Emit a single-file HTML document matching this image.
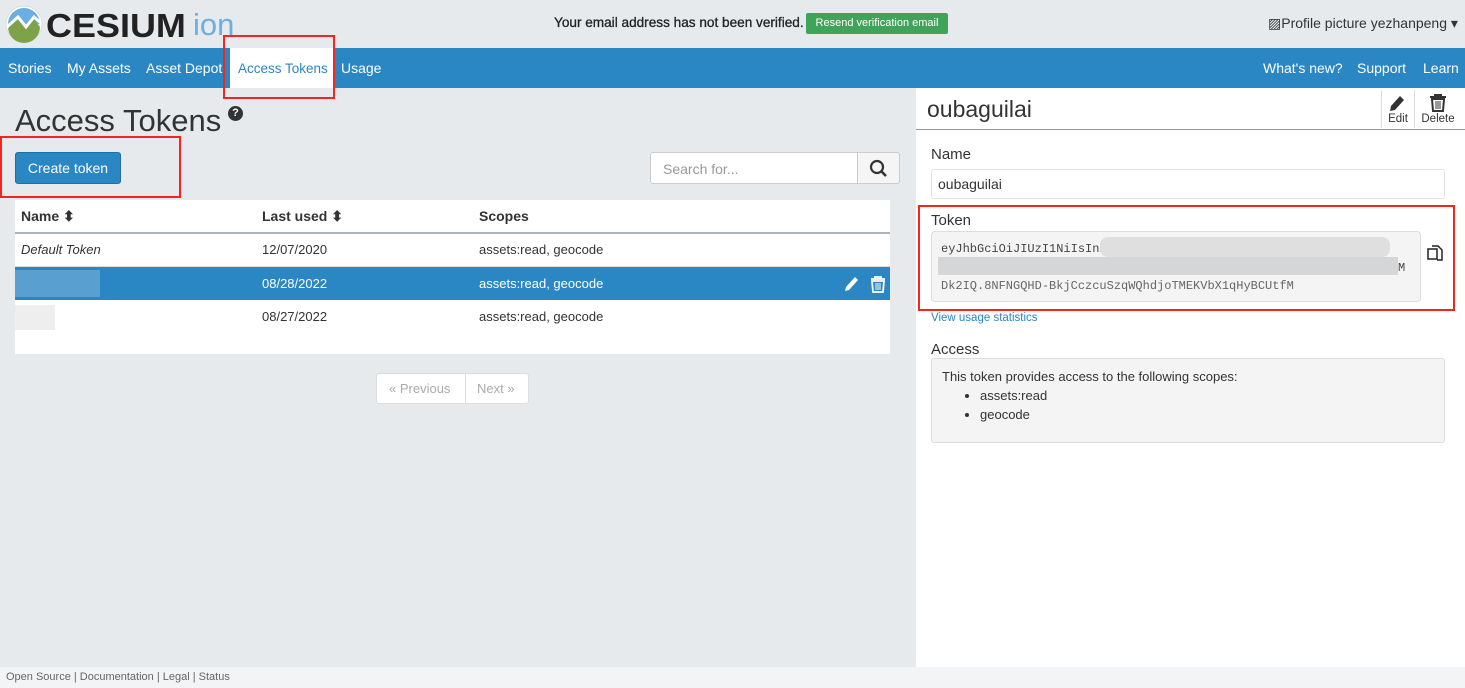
<!DOCTYPE html>
<html><head><meta charset="utf-8"><style>
*{box-sizing:border-box;margin:0;padding:0}
body{width:1465px;height:688px;overflow:hidden;background:#e6eaed;font-family:"Liberation Sans",sans-serif;color:#333;position:relative;font-size:14px}
.abs{position:absolute}
.nav{top:48px;left:0;width:1465px;height:40px;background:#2b87c4}
.nav span{position:absolute;top:12px;color:#fff;font-size:14px}
.red{border:2px solid #f2261f;position:absolute}
.mono{font-family:"Liberation Mono",monospace;font-size:12px;color:#444}
</style></head><body>
<svg class="abs" style="left:4px;top:5px" width="40" height="38" viewBox="0 0 40 38">
<circle cx="20" cy="19" r="18" fill="#fff" stroke="#ddd"/>
<path d="M4 19a16 16 0 0 1 32 0z" fill="#6aaee3"/>
<path d="M4 22a16 16 0 0 0 32 0L30 14 22 24 14 14z" fill="#7da24a"/>
<path d="M3 22L14 12 22 22 30 12 37 18" fill="none" stroke="#fff" stroke-width="3"/>
</svg>
<div class="abs" style="left:46px;top:7px;font-size:33px;font-weight:bold;color:#222;transform:scaleX(1.09);transform-origin:0 0">CESIUM</div>
<div class="abs" style="left:193px;top:7px;font-size:31px;color:#6aaee3">ion</div>
<div class="abs" style="left:554px;top:15px;font-size:13.6px;color:#222;-webkit-text-stroke:0.3px #222">Your email address has not been verified.</div>
<div class="abs" style="left:806px;top:13px;width:142px;height:21px;background:#3fa45a;border-radius:2px;color:#fff;font-size:11px;line-height:21px;text-align:center">Resend verification email</div>
<div class="abs" style="left:1268px;top:15px;font-size:14px;color:#333">▨Profile picture yezhanpeng ▾</div>
<div class="abs nav">
<span style="left:8px">Stories</span><span style="left:67px">My Assets</span><span style="left:146px">Asset Depot</span>
<div class="abs" style="left:230px;top:0;width:103px;height:40px;background:#fff"></div>
<span style="left:238px;color:#2b87c4;top:13px;font-size:13.5px">Access Tokens</span><span style="left:341px">Usage</span>
<span style="left:1263px">What's new?</span><span style="left:1357px">Support</span><span style="left:1423px">Learn</span>
</div>
<div class="red" style="left:223px;top:35px;width:112px;height:64px"></div>
<div class="abs" style="left:15px;top:103px;font-size:31px;color:#333">Access Tokens</div>
<div class="abs" style="left:228px;top:106px;width:15px;height:15px;border-radius:50%;background:#333;color:#fff;font-size:11px;font-weight:bold;text-align:center;line-height:15px">?</div>
<div class="abs" style="left:15px;top:152px;width:106px;height:32px;background:#2b87c4;border:1px solid #1f6fa3;border-radius:3px;color:#fff;text-align:center;line-height:30px">Create token</div>
<div class="red" style="left:0;top:136px;width:181px;height:62px"></div>
<div class="abs" style="left:650px;top:152px;width:208px;height:32px;background:#fff;border:1px solid #ccc;border-radius:3px 0 0 3px;color:#999;padding:8px 12px">Search for...</div>
<div class="abs" style="left:857px;top:152px;width:43px;height:32px;background:#f5f5f5;border:1px solid #ccc;border-radius:0 3px 3px 0">
<svg width="41" height="30"><circle cx="19" cy="14" r="6" fill="none" stroke="#333" stroke-width="2.2"/><path d="M23 18l5 5" stroke="#333" stroke-width="2.6"/></svg></div>
<div class="abs" style="left:15px;top:200px;width:875px;height:154px;background:#fff"></div>
<div class="abs" style="left:15px;top:232px;width:875px;height:2px;background:#aab4bd"></div>
<div class="abs" style="left:15px;top:266px;width:875px;height:1px;background:#ddd"></div>
<div class="abs" style="left:15px;top:267px;width:875px;height:33px;background:#2b87c4"></div>
<div class="abs" style="left:21px;top:208px;font-weight:bold">Name ⬍</div>
<div class="abs" style="left:262px;top:208px;font-weight:bold">Last used ⬍</div>
<div class="abs" style="left:479px;top:208px;font-weight:bold">Scopes</div>
<div class="abs" style="left:21px;top:242px;font-style:italic;font-size:13px">Default Token</div>
<div class="abs" style="left:262px;top:242px;font-size:13px">12/07/2020</div>
<div class="abs" style="left:479px;top:242px;font-size:13px">assets:read, geocode</div>
<div class="abs" style="left:15px;top:270px;width:85px;height:27px;background:#6da9d4;opacity:.7"></div>
<div class="abs" style="left:262px;top:276px;font-size:13px;color:#fff">08/28/2022</div>
<div class="abs" style="left:479px;top:276px;font-size:13px;color:#fff">assets:read, geocode</div>
<svg class="abs" style="left:843px;top:275px" width="45" height="18" viewBox="0 0 45 18">
<path d="M2 16l1-4 9-10 3 3-9 10z" fill="#fff"/>
<path d="M28 4h14M32 4V2h6v2M29 6h12l-1 11h-10z" fill="none" stroke="#fff" stroke-width="1.8"/>
<path d="M33 8v7M35 8v7M37 8v7" stroke="#fff" stroke-width="1"/></svg>
<div class="abs" style="left:15px;top:305px;width:40px;height:25px;background:#eee"></div>
<div class="abs" style="left:262px;top:309px;font-size:13px">08/27/2022</div>
<div class="abs" style="left:479px;top:309px;font-size:13px">assets:read, geocode</div>
<div class="abs" style="left:376px;top:373px;width:153px;height:31px;background:#fff;border:1px solid #ddd;border-radius:3px;color:#aaa;font-size:13px"><span style="position:absolute;left:12px;top:7px">« Previous</span><span style="position:absolute;left:88px;top:0;width:1px;height:29px;background:#ddd"></span><span style="position:absolute;left:100px;top:7px">Next »</span></div>
<div class="abs" style="left:916px;top:88px;width:549px;height:579px;background:#fff"></div>
<div class="abs" style="left:916px;top:129px;width:549px;height:1px;background:#999"></div>
<div class="abs" style="left:927px;top:96px;font-size:23px;color:#333">oubaguilai</div>
<div class="abs" style="left:1381px;top:90px;width:1px;height:38px;background:#ddd"></div>
<div class="abs" style="left:1414px;top:90px;width:1px;height:38px;background:#ddd"></div>
<svg class="abs" style="left:1388px;top:94px" width="20" height="18" viewBox="0 0 20 18"><path d="M2 17l1-5 9-10 4 4-9 10z" fill="#333"/></svg>
<svg class="abs" style="left:1428px;top:94px" width="20" height="18" viewBox="0 0 20 18"><path d="M2 3h16M7 3V1h6v2M4 5h12l-1 12H5z" fill="none" stroke="#333" stroke-width="2"/><path d="M8 7v8M10 7v8M12 7v8" stroke="#333"/></svg>
<div class="abs" style="left:1385px;top:113px;font-size:11.5px;width:26px;text-align:center">Edit</div>
<div class="abs" style="left:1416px;top:113px;font-size:11.5px;width:44px;text-align:center">Delete</div>
<div class="abs" style="left:931px;top:146px;font-size:15px">Name</div>
<div class="abs" style="left:931px;top:169px;width:514px;height:30px;border:1px solid #e4e4e4;border-radius:3px;padding:6px 6px;font-size:14px">oubaguilai</div>
<div class="abs" style="left:931px;top:212px;font-size:15px">Token</div>
<div class="abs" style="left:931px;top:231px;width:490px;height:71px;background:#f4f4f4;border:1px solid #ddd;border-radius:4px"></div>
<div class="abs mono" style="left:941px;top:242px">eyJhbGciOiJIUzI1NiIsInR</div>
<div class="abs" style="left:1100px;top:237px;width:290px;height:20px;background:#dfdfe0;border-radius:8px"></div>
<div class="abs" style="left:938px;top:257px;width:460px;height:18px;background:#d5d6d8"></div>
<div class="abs mono" style="left:1398px;top:261px">M</div>
<div class="abs mono" style="left:941px;top:279px;color:#666">Dk2IQ.8NFNGQHD-BkjCczcuSzqWQhdjoTMEKVbX1qHyBCUtfM</div>
<svg class="abs" style="left:1426px;top:243px" width="20" height="20" viewBox="0 0 20 20"><path d="M2 6h9v10H2zM6 3h6l4 4v10h-5" fill="#fff" stroke="#222" stroke-width="1.5"/></svg>
<div class="red" style="left:918px;top:205px;width:537px;height:106px"></div>
<div class="abs" style="left:931px;top:312px;font-size:11.5px;color:#2b87c4">View usage statistics</div>
<div class="abs" style="left:931px;top:341px;font-size:15px">Access</div>
<div class="abs" style="left:931px;top:358px;width:514px;height:85px;background:#f4f4f4;border:1px solid #ddd;border-radius:3px;padding:10px;font-size:13px">This token provides access to the following scopes:
<ul style="margin-left:38px;margin-top:2px;line-height:19px"><li>assets:read</li><li>geocode</li></ul></div>
<div class="abs" style="left:0;top:667px;width:1465px;height:21px;background:#f3f4f5"></div>
<div class="abs" style="left:6px;top:671px;font-size:11px;color:#666">Open Source | Documentation | Legal | Status</div>
</body></html>
